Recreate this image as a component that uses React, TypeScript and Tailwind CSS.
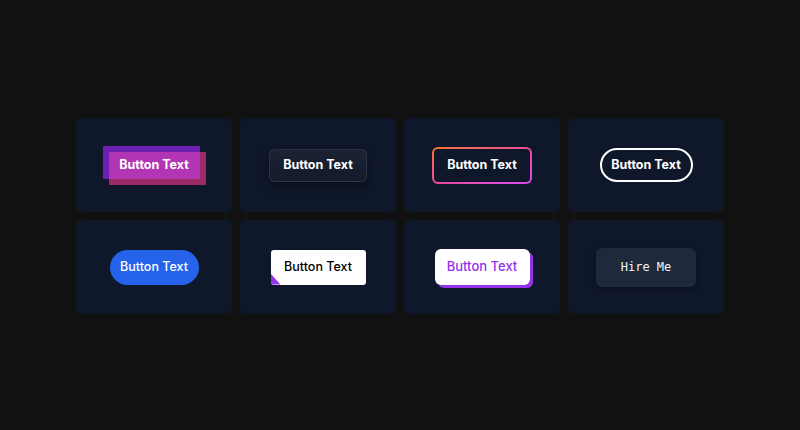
import React from 'react';

const Card = ({ children }: { children: React.ReactNode }) => (
  <div className="flex h-[94px] items-center justify-center rounded-md bg-[#0f172a]">{children}</div>
);

const font = { fontFamily: 'Inter, "Liberation Sans", sans-serif' };

export default function App() {
  return (
    <div className="flex h-[430px] w-full items-center justify-center bg-[#111111] pt-[2px]" style={font}>
      <div className="grid w-[648px] grid-cols-4 gap-2">
        {/* stacked layers */}
        <Card>
          <div className="relative h-[39px] w-[103px]">
            <div className="absolute left-0 top-0 h-[33px] w-[97px] bg-[#6d1fb0]" />
            <div className="absolute left-[6px] top-[6px] h-[33px] w-[97px] bg-[#9b2a66]" />
            <div className="absolute left-[6px] top-[6px] h-[27px] w-[91px] bg-[#b236b4]" />
            <span className="absolute inset-0 flex items-center justify-center text-[12.5px] font-bold text-white">
              Button Text
            </span>
          </div>
        </Card>

        {/* glass */}
        <Card>
          <button className="h-[33px] w-[98px] rounded-md border border-white/10 bg-gradient-to-b from-[#1a2233] to-[#121a2b] text-[12.5px] font-bold text-white shadow-[0_4px_10px_rgba(0,0,0,0.4)]">
            Button Text
          </button>
        </Card>

        {/* gradient border */}
        <Card>
          <div className="h-[37px] w-[100px] rounded-md bg-gradient-to-br from-[#f97316] via-[#ec4899] to-[#d946ef] p-[2px]">
            <button className="h-full w-full rounded-[4px] bg-[#0f172a] text-[12.5px] font-bold text-white">
              Button Text
            </button>
          </div>
        </Card>

        {/* outline pill */}
        <Card>
          <button className="h-[34px] w-[93px] rounded-full border-2 border-white bg-transparent text-[12.5px] font-bold text-white">
            Button Text
          </button>
        </Card>

        {/* blue pill */}
        <Card>
          <button className="h-[35px] w-[89px] rounded-full bg-[#2563eb] text-[12.5px] font-medium text-white">
            Button Text
          </button>
        </Card>

        {/* corner triangle */}
        <Card>
          <button className="relative h-[35px] w-[95px] overflow-hidden rounded-[3px] bg-white text-[12.5px] font-medium text-black">
            <span
              className="absolute bottom-0 left-0 h-[11px] w-[10px] bg-[#9333ea]"
              style={{ clipPath: 'polygon(0 0, 100% 100%, 0 100%)' }}
            />
            Button Text
          </button>
        </Card>

        {/* offset shadow */}
        <Card>
          <button className="h-[36px] w-[95px] rounded-md bg-white text-[13px] font-medium text-[#9333ea] shadow-[3px_3px_0_#9333ea]">
            Button Text
          </button>
        </Card>

        {/* mono */}
        <Card>
          <button
            className="h-[39px] w-[100px] rounded-md bg-[#1e293b] text-[12px] text-[#f1f5f9] shadow-[0_2px_6px_rgba(0,0,0,0.3)]"
            style={{ fontFamily: '"DejaVu Sans Mono", monospace' }}
          >
            Hire Me
          </button>
        </Card>
      </div>
    </div>
  );
}
